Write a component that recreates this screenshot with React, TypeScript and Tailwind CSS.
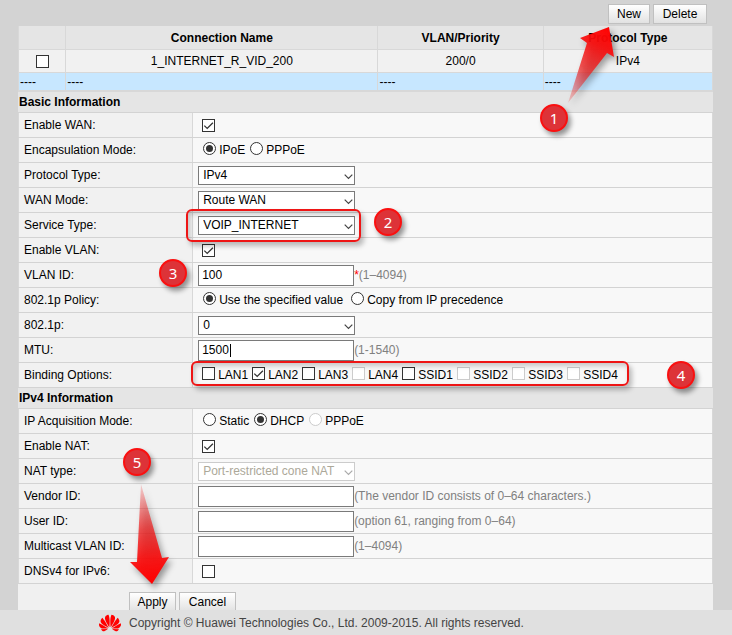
import React, { useState } from "react";
import { SiHuawei } from "react-icons/si";

function Tick({
  id,
  label,
  checked = false,
  disabled = false,
}: {
  id: string;
  label?: string;
  checked?: boolean;
  disabled?: boolean;
}) {
  const [on, setOn] = useState(checked);
  return (
    <span className="relative inline-flex h-[13px] w-[13px] shrink-0">
      <input
        id={id}
        type="checkbox"
        aria-label={label}
        checked={on}
        disabled={disabled}
        onChange={(e) => setOn(e.target.checked)}
        className="h-[13px] w-[13px] appearance-none border border-[#333] bg-white disabled:border-[#ccc]"
      />
      {on && (
        <svg viewBox="0 0 13 13" className="pointer-events-none absolute inset-0 h-[13px] w-[13px]">
          <path d="M2.3 6.6 5.2 9.4 10.9 3.7" fill="none" stroke="#333" strokeWidth="1.3" />
        </svg>
      )}
    </span>
  );
}

function Radio({
  name,
  label,
  checked = false,
  disabled = false,
}: {
  name: string;
  label: string;
  checked?: boolean;
  disabled?: boolean;
}) {
  return (
    <label className="flex items-center gap-[3px] whitespace-nowrap">
      <span className="mb-1 flex">
        <input
          type="radio"
          name={name}
          defaultChecked={checked}
          disabled={disabled}
          className="flex h-[13px] w-[13px] appearance-none items-center justify-center rounded-full border border-[#333] bg-white checked:before:h-[7px] checked:before:w-[7px] checked:before:rounded-full checked:before:bg-[#333] disabled:border-[#ccc]"
        />
      </span>
      <span>{label}</span>
    </label>
  );
}

function Choice({
  id,
  options,
  disabled = false,
}: {
  id: string;
  options: string[];
  disabled?: boolean;
}) {
  return (
    <span className={`relative flex h-[19px] w-[157px] ${disabled ? "text-[#aca899]" : "text-black"}`}>
      <select
        id={id}
        disabled={disabled}
        className="h-full w-full appearance-none border border-[#7a7a7a] bg-white pb-px pl-1 disabled:border-[#ccc] disabled:opacity-100"
      >
        {options.map((o) => (
          <option key={o}>{o}</option>
        ))}
      </select>
      <svg
        viewBox="0 0 9 6"
        className={`pointer-events-none absolute top-[8px] right-[2px] h-[6px] w-[9px] ${
          disabled ? "stroke-[#aaa]" : "stroke-[#444]"
        }`}
      >
        <path d="M.7.7 4.5 4.5 8.3.7" fill="none" strokeWidth="1.2" />
      </svg>
    </span>
  );
}

function TextBox({ id, value = "" }: { id: string; value?: string }) {
  return (
    <input
      id={id}
      type="text"
      defaultValue={value}
      className="h-[21px] w-[156px] border border-[#7a7a7a] bg-white px-[3px] outline-none"
    />
  );
}

function Hint({ children }: { children: React.ReactNode }) {
  return <span className="text-[#808080]">{children}</span>;
}

function Row({ label, htmlFor, children }: { label: string; htmlFor?: string; children: React.ReactNode }) {
  return (
    <div className="flex h-[25px] border-b border-[#d3d3d3]">
      <div className="flex w-[25.2%] shrink-0 items-center border-x border-[#d8d8d8] bg-[#f1f1f1] pl-[5px]">
        {htmlFor ? <label htmlFor={htmlFor}>{label}</label> : <span>{label}</span>}
      </div>
      <div className="relative flex min-w-0 flex-1 items-center border-r border-[#d8d8d8] bg-[#f8f8f8] pl-[5px]">
        {children}
      </div>
    </div>
  );
}

function Section({ title }: { title: string }) {
  return (
    <h2 className="h-[21px] border-b border-[#d3d3d3] bg-[#e5e5e5] pl-px leading-[20px] font-bold">{title}</h2>
  );
}

function Badge({ n, className }: { n: number; className: string }) {
  return (
    <span
      className={`absolute z-20 flex h-7 w-7 items-center justify-center rounded-full border-2 border-[#fa1010] bg-[#dd3338] font-['Noto_Sans',sans-serif] text-[15px] text-white shadow-[3px_4px_5px_rgba(0,0,0,0.4)] ${className}`}
    >
      {n}
    </span>
  );
}

function Frame({ className }: { className: string }) {
  return (
    <span
      className={`pointer-events-none absolute z-10 rounded-md border-2 border-[#ee1515] shadow-[3px_4px_5px_rgba(0,0,0,0.25),inset_2px_3px_5px_rgba(0,0,0,0.2)] ${className}`}
    />
  );
}

function Arrow({
  id,
  points,
  from,
  to,
  className,
}: {
  id: string;
  points: string;
  from: [number, number];
  to: [number, number];
  className: string;
}) {
  return (
    <svg
      viewBox="0 0 50 110"
      className={`pointer-events-none absolute z-10 h-[110px] w-[50px] overflow-visible drop-shadow-[3px_4px_3px_rgba(0,0,0,0.4)] ${className}`}
    >
      <defs>
        <linearGradient id={id} gradientUnits="userSpaceOnUse" x1={from[0]} y1={from[1]} x2={to[0]} y2={to[1]}>
          <stop offset="0" stopColor="#f01818" stopOpacity="0.15" />
          <stop offset="0.45" stopColor="#ee1c1c" stopOpacity="0.75" />
          <stop offset="0.75" stopColor="#fa0c0c" stopOpacity="0.93" />
          <stop offset="1" stopColor="#ff0000" />
        </linearGradient>
      </defs>
      <polygon points={points} fill={`url(#${id})`} />
    </svg>
  );
}

const bindings = [
  { name: "LAN1" },
  { name: "LAN2", checked: true },
  { name: "LAN3" },
  { name: "LAN4", disabled: true },
  { name: "SSID1" },
  { name: "SSID2", disabled: true },
  { name: "SSID3", disabled: true },
  { name: "SSID4", disabled: true },
];

const button = "h-5 border border-[#c0c0c0] bg-linear-to-b from-white to-[#e2e2e2] text-center";
const cell = "border-r border-b border-[#d8d8d8] p-0";

export default function App() {
  return (
    <div className="min-h-screen bg-[#d3d3d3] font-['Liberation_Sans',Arial,sans-serif] text-[12px] leading-4 text-black">
      <main className="relative mr-[19px] ml-[18px]">
        <div className="flex h-[26px] items-start justify-end gap-[3px] pt-1 pr-[6px]">
          <button className={`${button} w-[42px]`}>New</button>
          <button className={`${button} w-[54px]`}>Delete</button>
        </div>
        <Arrow
          id="arrow-new"
          className="top-[20px] right-[95px]"
          points="0,83 19,23 12,18 41,7 46,37 39,33"
          from={[0, 83]}
          to={[41, 7]}
        />
        <Badge n={1} className="top-[104px] right-[145px]" />

        <table className="w-full table-fixed border-separate border-spacing-0 border-l border-[#d8d8d8]">
          <thead>
            <tr className="h-6 bg-[#e5e5e5]">
              <th className={`${cell} w-[6.8%]`} />
              <th className={`${cell} w-[45%]`}>Connection Name</th>
              <th className={`${cell} w-[23.8%]`}>VLAN/Priority</th>
              <th className={cell}>Protocol Type</th>
            </tr>
          </thead>
          <tbody>
            <tr className="h-[23px] bg-[#f1f1f1] text-center">
              <td className={cell}>
                <span className="flex justify-center">
                  <Tick id="wan-1" label="Select 1_INTERNET_R_VID_200" />
                </span>
              </td>
              <td className={cell}>1_INTERNET_R_VID_200</td>
              <td className={cell}>200/0</td>
              <td className={cell}>IPv4</td>
            </tr>
            <tr className="h-[19px] bg-[#c7e7ff]">
              {[0, 1, 2, 3].map((i) => (
                <td key={i} className="border-r border-b-2 border-[#d8d8d8] p-0 pl-px">
                  ----
                </td>
              ))}
            </tr>
          </tbody>
        </table>

        <form className="bg-[#f0f0f0]" onSubmit={(e) => e.preventDefault()}>
          <Section title="Basic Information" />
          <Row label="Enable WAN:" htmlFor="enable-wan">
            <span className="ml-1 flex">
              <Tick id="enable-wan" checked />
            </span>
          </Row>
          <Row label="Encapsulation Mode:">
            <span className="ml-[5px] flex gap-[5px]">
              <Radio name="encap" label="IPoE" checked />
              <Radio name="encap" label="PPPoE" />
            </span>
          </Row>
          <Row label="Protocol Type:" htmlFor="protocol">
            <Choice id="protocol" options={["IPv4", "IPv6", "IPv4/IPv6"]} />
          </Row>
          <Row label="WAN Mode:" htmlFor="wan-mode">
            <Choice id="wan-mode" options={["Route WAN", "Bridge WAN"]} />
          </Row>
          <Row label="Service Type:" htmlFor="service">
            <Choice id="service" options={["VOIP_INTERNET", "INTERNET", "VOIP"]} />
            <Frame className="-top-1 -left-[7px] h-[33px] w-[175px]" />
            <Badge n={2} className="-top-[5px] left-[181px]" />
          </Row>
          <Row label="Enable VLAN:" htmlFor="enable-vlan">
            <span className="ml-1 flex">
              <Tick id="enable-vlan" checked />
            </span>
          </Row>
          <Row label="VLAN ID:" htmlFor="vlan-id">
            <TextBox id="vlan-id" value="100" />
            <span className="text-[#ff0000]">*</span>
            <Hint>(1–4094)</Hint>
            <Badge n={3} className="-top-1 -left-[34px]" />
          </Row>
          <Row label="802.1p Policy:">
            <span className="ml-[5px] flex gap-2">
              <Radio name="policy" label="Use the specified value" checked />
              <Radio name="policy" label="Copy from IP precedence" />
            </span>
          </Row>
          <Row label="802.1p:" htmlFor="priority">
            <Choice id="priority" options={["0", "1", "2", "3", "4", "5", "6", "7"]} />
          </Row>
          <Row label="MTU:" htmlFor="mtu">
            <TextBox id="mtu" value="1500" />
            <span className="absolute top-[6px] left-[37px] h-[13px] w-px bg-black" />
            <Hint>(1-1540)</Hint>
          </Row>
          <Row label="Binding Options:">
            <span className="ml-1 flex">
              {bindings.map((b) => (
                <span
                  key={b.name}
                  className={`flex items-center gap-[3px] ${b.name.startsWith("LAN") ? "w-[50px]" : "w-[55px]"}`}
                >
                  <span className="mb-1 flex">
                    <Tick id={b.name} checked={b.checked} disabled={b.disabled} />
                  </span>
                  <label htmlFor={b.name}>{b.name}</label>
                </span>
              ))}
            </span>
            <Frame className="-top-0.5 -left-0.5 h-[25px] w-[438px]" />
            <Badge n={4} className="-top-0.5 right-[17px]" />
          </Row>

          <Section title="IPv4 Information" />
          <Row label="IP Acquisition Mode:">
            <span className="ml-[5px] flex gap-[5px]">
              <Radio name="acq" label="Static" />
              <Radio name="acq" label="DHCP" checked />
              <Radio name="acq" label="PPPoE" disabled />
            </span>
          </Row>
          <Row label="Enable NAT:" htmlFor="enable-nat">
            <span className="ml-1 flex">
              <Tick id="enable-nat" checked />
            </span>
          </Row>
          <Row label="NAT type:" htmlFor="nat-type">
            <Choice id="nat-type" options={["Port-restricted cone NAT"]} disabled />
            <Badge n={5} className="-top-[11px] -left-[70px]" />
            <Arrow
              id="arrow-apply"
              className="top-[21px] -left-[68px]"
              points="16,4 37,78 44,77 27,104 5,82 12,82"
              from={[16, 4]}
              to={[27, 104]}
            />
          </Row>
          <Row label="Vendor ID:" htmlFor="vendor">
            <TextBox id="vendor" />
            <Hint>(The vendor ID consists of 0–64 characters.)</Hint>
          </Row>
          <Row label="User ID:" htmlFor="user">
            <TextBox id="user" />
            <Hint>(option 61, ranging from 0–64)</Hint>
          </Row>
          <Row label="Multicast VLAN ID:" htmlFor="multicast">
            <TextBox id="multicast" />
            <Hint>(1–4094)</Hint>
          </Row>
          <Row label="DNSv4 for IPv6:" htmlFor="dns">
            <span className="ml-1 flex">
              <Tick id="dns" />
            </span>
          </Row>
          <div className="flex h-[26px] gap-[3px] overflow-hidden pt-2 pl-[111px]">
            <button className={`${button} w-[47px] shrink-0`}>Apply</button>
            <button className={`${button} w-[57px] shrink-0`}>Cancel</button>
          </div>
        </form>
      </main>
      <footer className="flex h-[25px] items-center gap-2 bg-[#e0e0e0] pl-[99px] text-[#444]">
        <SiHuawei className="h-[22px] w-[22px] text-[#f00]" />
        <span>Copyright © Huawei Technologies Co., Ltd. 2009-2015. All rights reserved.</span>
      </footer>
    </div>
  );
}
